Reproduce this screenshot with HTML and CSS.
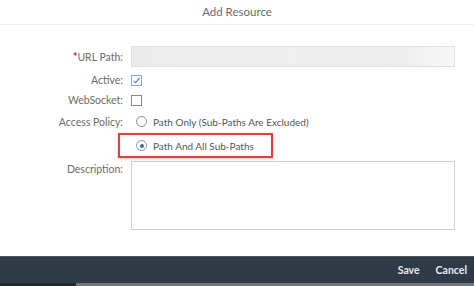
FILE: index.html
```html
<!DOCTYPE html>
<html lang="en">
<head>
    <meta charset="UTF-8">
    <meta name="viewport" content="width=device-width, initial-scale=1.0">
    <title>Add Resource</title>
    <link rel="stylesheet" href="styles.css">
</head>
<body>

<div class="dialog">
    <div class="header">Add Resource</div>

    <div class="form">
        <div class="row row-url">
            <label class="label"><span class="req">*</span>URL Path:</label>
            <div class="field"><div class="input-blur"></div></div>
        </div>
        <div class="row row-check">
            <label class="label">Active:</label>
            <div class="field"><span class="checkbox checked">
                <svg width="9" height="9" viewBox="0 0 9 9"><path d="M1.5 4.8 L3.6 6.8 L7.6 1.8" fill="none" stroke="#4a78b0" stroke-width="1.1"/></svg>
            </span></div>
        </div>
        <div class="row row-check">
            <label class="label">WebSocket:</label>
            <div class="field"><span class="checkbox"></span></div>
        </div>
        <div class="row row-policy">
            <label class="label">Access Policy:</label>
            <div class="field radio-field"><span class="radio"></span>Path Only (Sub-Paths Are Excluded)</div>
        </div>
        <div class="row row-all">
            <label class="label"></label>
            <div class="field radio-field">
                <span class="highlight"></span>
                <span class="radio selected"></span>Path And All Sub-Paths
            </div>
        </div>
        <div class="row row-desc">
            <label class="label">Description:</label>
            <div class="field"><div class="textarea"></div></div>
        </div>
    </div>

    <div class="footer">
        <button class="btn">Save</button>
        <button class="btn">Cancel</button>
    </div>
    <div class="bottom-strip"><span class="strip-dark"></span></div>
</div>

</body>
</html>
```

FILE: styles.css
```css
body {
    margin: 0;
    font-family: Lato, "Liberation Sans", Arial, sans-serif;
    background-color: white;
}

.dialog {
    width: 474px;
    height: 286px;
    display: flex;
    flex-direction: column;
    overflow: hidden;
}

.header {
    height: 24px;
    line-height: 24px;
    text-align: center;
    font-size: 11.5px;
    color: #6a6a6a;
    border-bottom: 1px solid #efefef;
    flex-shrink: 0;
}

.form {
    padding: 21px 19px 0 0;
    flex: 1;
}

.row {
    display: flex;
    align-items: center;
}

.label {
    width: 123px;
    text-align: right;
    font-size: 10.5px;
    color: #6b6b6b;
    flex-shrink: 0;
}

.field {
    flex: 1;
    margin-left: 8px;
    position: relative;
}

.req {
    color: #c8201c;
    font-weight: bold;
}

.row-url {
    height: 21px;
    margin-bottom: 3px;
}

.input-blur {
    height: 19px;
    border: 1px solid #e0e0e0;
    background: linear-gradient(to right, #ebebeb, #efefef 50%, #ececec 80%, #f7f7f7);
}

.row-check {
    height: 20px;
}

.checkbox {
    display: flex;
    align-items: center;
    justify-content: center;
    width: 9px;
    height: 9px;
    border: 1px solid #8a8a8a;
    background: white;
}

.checkbox.checked {
    border-color: #8fa8c4;
}

.row-policy {
    height: 23px;
}

.row-all {
    height: 25px;
    align-items: stretch;
}

.radio-field {
    display: flex;
    align-items: center;
    font-size: 10px;
    color: #555;
}

.radio {
    width: 9px;
    height: 9px;
    border: 1px solid #8d8d8d;
    border-radius: 50%;
    margin: 0 6px 0 5px;
    position: relative;
    background: white;
}

.radio.selected {
    border-color: #7f96b4;
}

.radio.selected::after {
    content: "";
    position: absolute;
    left: 2.5px;
    top: 2.5px;
    width: 4px;
    height: 4px;
    border-radius: 50%;
    background: #3f6a9c;
}

/* annotation box drawn over the second option */
.highlight {
    position: absolute;
    left: -13px;
    top: 0;
    bottom: 0;
    width: 151px;
    border: 2px solid #e2403e;
    box-shadow: 0 1px 3px rgba(200, 60, 60, 0.35);
}

.row-desc {
    align-items: flex-start;
    margin-top: 3px;
}

.row-desc .label {
    padding-top: 2px;
}

.textarea {
    height: 67px;
    border: 1px solid #cfcfcf;
    background: white;
}

.footer {
    height: 26px;
    background-color: #2f3a47;
    border-top: 1px solid #4a5462;
    display: flex;
    justify-content: flex-end;
    align-items: center;
    gap: 2px;
    flex-shrink: 0;
}

.btn {
    background: none;
    border: none;
    color: #e6ebf0;
    font-family: Lato, "Liberation Sans", Arial, sans-serif;
    font-size: 10.5px;
    font-weight: bold;
    padding: 0 7px;
    cursor: pointer;
}

.bottom-strip {
    height: 3px;
    background: #72767b;
    flex-shrink: 0;
}

.strip-dark {
    display: block;
    width: 76px;
    height: 3px;
    background: #1f2833;
}
```
